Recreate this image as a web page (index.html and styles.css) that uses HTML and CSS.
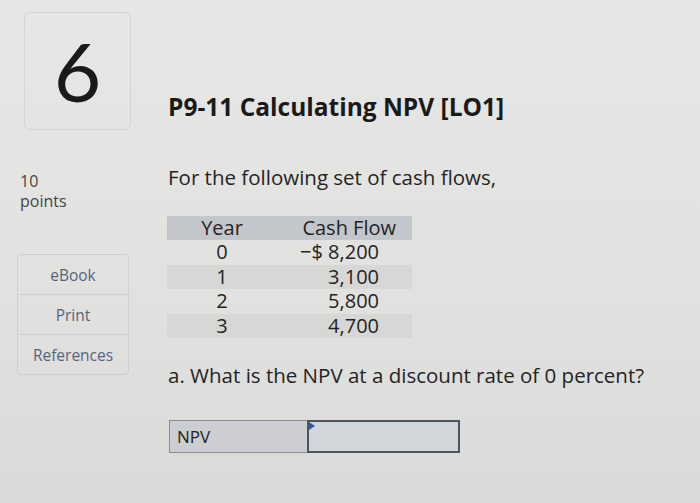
FILE: index.html
```html
<!DOCTYPE html>
<html>
<head>
<meta charset="utf-8">
<link rel="stylesheet" href="styles.css">
</head>
<body>
<div class="page">
  <aside class="side">
    <div class="qnum">6</div>
    <div class="points"><div class="pts-num">10</div><div class="pts-label">points</div></div>
    <div class="tools">
      <div class="tool">eBook</div>
      <div class="tool">Print</div>
      <div class="tool">References</div>
    </div>
  </aside>
  <main class="main">
    <h1 class="title">P9-11 Calculating NPV [LO1]</h1>
    <p class="intro">For the following set of cash flows,</p>
    <table class="cf">
      <thead><tr><th class="c-year">Year</th><th class="c-cash">Cash Flow</th></tr></thead>
      <tbody>
        <tr><td class="c-year">0</td><td class="c-cash">−$ 8,200</td></tr>
        <tr class="alt"><td class="c-year">1</td><td class="c-cash">3,100</td></tr>
        <tr><td class="c-year">2</td><td class="c-cash">5,800</td></tr>
        <tr class="alt"><td class="c-year">3</td><td class="c-cash">4,700</td></tr>
      </tbody>
    </table>
    <p class="question">a. What is the NPV at a discount rate of 0 percent?</p>
    <div class="npv">
      <div class="npv-label">NPV</div>
      <div class="npv-input"><span class="flag"></span></div>
    </div>
  </main>
</div>
</body>
</html>
```
FILE: styles.css
```css
html, body { margin: 0; padding: 0; }
body {
  width: 700px; height: 503px; overflow: hidden;
  background: linear-gradient(180deg, #e7e7e5 0%, #e1e1df 60%, #dadad8 100%);
  font-family: "Open Sans", "Lato", sans-serif;
  color: #222;
}
.page { display: flex; }
.side { width: 168px; flex: none; }
.qnum {
  margin: 12px 0 0 24px;
  width: 107px; height: 118px;
  border: 1px solid #d3d3d1; border-radius: 6px;
  display: flex; align-items: center; justify-content: center;
  font-family: "Lato", sans-serif;
  font-size: 82px; font-weight: 400; color: #1a1a1a; line-height: 1;
  padding-bottom: 2px; box-sizing: border-box;
}
.points { margin: 41px 0 0 20px; color: #454545; font-size: 16px; line-height: 20px; }
.tools {
  margin: 43px 0 0 17px; width: 110px;
  border: 1px solid #cfcfcd; border-radius: 4px;
}
.tool {
  height: 39px; display: flex; align-items: center; justify-content: center;
  font-size: 15.5px; color: #56657f;
  border-top: 1px solid #cfcfcd;
}
.tool:first-child { border-top: none; }
.main { padding-top: 92px; }
.title { margin: 0; font-size: 24.5px; font-weight: 700; line-height: 30px; color: #1a1a1a; }
.intro { margin: 42px 0 0 0; font-size: 20.5px; line-height: 26px; color: #242424; }
.cf { margin: 26px 0 0 -1px; border-collapse: collapse; font-size: 20px; color: #242424; }
.cf th, .cf td { padding: 0; height: 24.5px; line-height: 24px; font-weight: 400; }
.cf thead th { height: 24px; }
.cf thead tr { background: #c3c6cb; }
.cf tr.alt { background: #d7d7d6; }
.c-year { width: 110px; text-align: center; }
.c-cash { width: 135px; text-align: right; padding-right: 33px !important; box-sizing: border-box; }
.cf th.c-cash { text-align: right; padding-right: 16px !important; }
.question { margin: 24px 0 0 0; font-size: 20.5px; line-height: 26px; color: #242424; }
.npv { margin: 32px 0 0 1px; display: flex; width: 291px; height: 33px; }
.npv-label {
  width: 138px; box-sizing: border-box;
  background: #ccced1; border: 1px solid #8a8c90; border-right: none;
  font-size: 17px; line-height: 31px; padding-left: 7px; color: #222;
}
.npv-input {
  flex: 1; position: relative; box-sizing: border-box;
  background: #d3d6da; border: 2px solid #4e5560;
}
.flag {
  position: absolute; left: 0; top: 0; width: 0; height: 0;
  border-top: 4px solid transparent; border-bottom: 4px solid transparent;
  border-left: 6px solid #1f5fa8;
}
```
